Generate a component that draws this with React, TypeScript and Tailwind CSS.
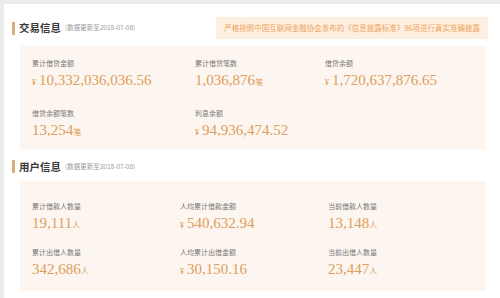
import React from "react";

interface Stat {
  label: string;
  value: string;
  yen?: boolean;
  unit?: string;
}

const tradeStats: Stat[] = [
  { label: "累计借贷金额", value: "10,332,036,036.56", yen: true },
  { label: "累计借贷笔数", value: "1,036,876", unit: "笔" },
  { label: "借贷余额", value: "1,720,637,876.65", yen: true },
  { label: "借贷余额笔数", value: "13,254", unit: "笔" },
  { label: "利息余额", value: "94,936,474.52", yen: true },
];

const userStats: Stat[] = [
  { label: "累计借款人数量", value: "19,111", unit: "人" },
  { label: "人均累计借款金额", value: "540,632.94", yen: true },
  { label: "当前借款人数量", value: "13,148", unit: "人" },
  { label: "累计出借人数量", value: "342,686", unit: "人" },
  { label: "人均累计出借金额", value: "30,150.16", yen: true },
  { label: "当前出借人数量", value: "23,447", unit: "人" },
];

const cjk = "font-['Liberation_Serif','Noto_Sans_CJK_SC',serif]";

function Heading({ title }: { title: string }) {
  return (
    <div className="flex items-center">
      <span className="w-[3px] h-[13px] bg-[#d9ab7e] mr-[4px]"></span>
      <span className="text-[10.5px] font-bold text-[#3a3a3a] font-['Noto_Sans_CJK_SC',sans-serif]">{title}</span>
      <span className="ml-[4px] text-[6.5px] text-[#9a9a9a] font-['Noto_Sans_CJK_SC',sans-serif]">(数据更新至2018-07-08)</span>
    </div>
  );
}

function StatCell({ item }: { item: Stat }) {
  return (
    <div>
      <div className="text-[7px] leading-[10px] text-[#777] font-['Noto_Sans_CJK_SC',sans-serif]">{item.label}</div>
      <div className={`mt-[3px] text-[15px] leading-[18px] text-[#dd9d5c] ${cjk} whitespace-nowrap`}>
        {item.yen && <span className="text-[8px] mr-[3px]">¥</span>}
        {item.value}
        {item.unit && <span className="text-[8px]">{item.unit}</span>}
      </div>
    </div>
  );
}

export default function App() {
  return (
    <div className="w-[500px] h-[298px] bg-[#ececec] pt-[4px] pl-[4px] overflow-hidden">
      <div className="bg-white h-full pl-[8px] pr-[12px]">
        <div className="flex items-center justify-between pt-[10px] h-[38px]">
          <Heading title="交易信息" />
          <div className="bg-[#fdf0e3] text-[#f0a35a] text-[7.5px] px-[8px] py-[5px] font-['Noto_Sans_CJK_SC',sans-serif] whitespace-nowrap">
            严格按照中国互联网金融协会发布的《信息披露标准》96项进行真实准确披露
          </div>
        </div>
        <div className="mt-[4px] ml-[8px] mr-[2px] bg-[#fdf6f0] pl-[12px] pt-[12px] pb-[12px] h-[104px] grid grid-cols-[163px_130px_1fr] gap-y-[16px] content-start">
          {tradeStats.map((s, i) => (
            <StatCell key={i} item={s} />
          ))}
        </div>
        <div className="flex items-center h-[31px] pt-[2px]">
          <Heading title="用户信息" />
        </div>
        <div className="ml-[8px] mr-[2px] bg-[#fdf6f0] pl-[12px] pt-[20px] h-[110px] grid grid-cols-[148px_148px_1fr] gap-y-[12px] content-start">
          {userStats.map((s, i) => (
            <StatCell key={i} item={s} />
          ))}
        </div>
      </div>
    </div>
  );
}
